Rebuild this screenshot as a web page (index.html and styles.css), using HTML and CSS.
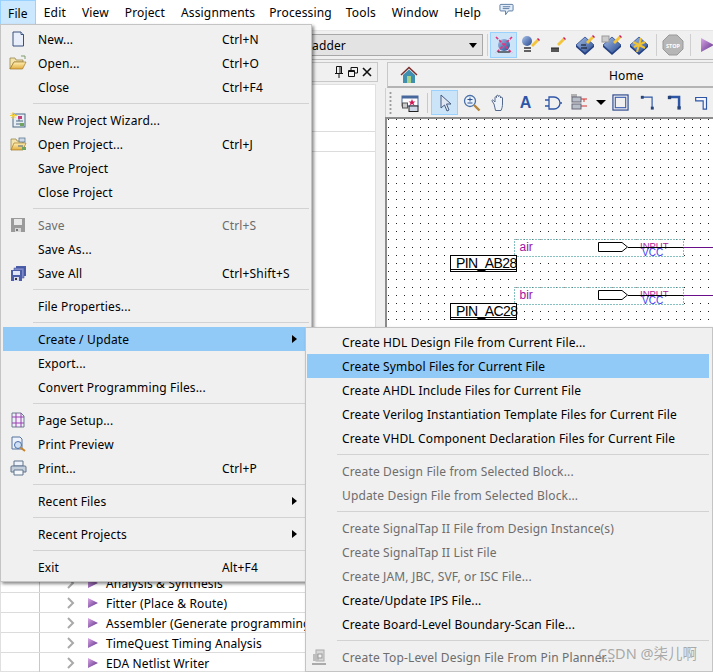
FILE: index.html
```html
<!DOCTYPE html>
<html lang="en">
<head>
<meta charset="utf-8">
<title>Quartus File Menu</title>
<link rel="stylesheet" href="styles.css">
</head>
<body>
<svg class="defs" width="0" height="0" aria-hidden="true">
  <defs>
    <linearGradient id="blueGem" x1="0" y1="0" x2="1" y2="1"><stop offset="0" stop-color="#a9c3ea"/><stop offset="1" stop-color="#27498f"/></linearGradient>
    <linearGradient id="purple" x1="0" y1="0" x2="1" y2="1"><stop offset="0" stop-color="#d9a8e6"/><stop offset="1" stop-color="#5b2a86"/></linearGradient>
    <linearGradient id="folder" x1="0" y1="0" x2="0" y2="1"><stop offset="0" stop-color="#fff1b5"/><stop offset="1" stop-color="#e2ac3f"/></linearGradient>
    <g id="pencil"><path d="M0 6 L6 0 L8 2 L2 8 Z" fill="#f2c53d"/><path d="M6 0 L8 2 L9 1 L7 -1 Z" fill="#c8185c"/></g>
    <g id="gem"><path d="M1 10 L10 2 L19 10 L10 18 Z" fill="url(#blueGem)" stroke="#27498f" stroke-width=".8"/><path d="M1 10 L10 18 L19 10 L19 12 L10 20 L1 12 Z" fill="#1f3d80"/></g>
    <g id="runArrow"><path d="M1 0 L11 5 L1 10 Z" fill="url(#purple)"/></g>
    <g id="chev"><path d="M1 1 L6 6 L1 11" fill="none" stroke="#a9a9a9" stroke-width="2"/></g>
  </defs>
</svg>

<nav class="menubar">
  <span class="mb-item mb-active">File</span>
  <span class="mb-item">Edit</span>
  <span class="mb-item">View</span>
  <span class="mb-item">Project</span>
  <span class="mb-item mb-tight">Assignments</span>
  <span class="mb-item mb-tight">Processing</span>
  <span class="mb-item">Tools</span>
  <span class="mb-item">Window</span>
  <span class="mb-item">Help</span>
  <svg class="mb-icon" width="15" height="14" viewBox="0 0 16 14"><path d="M2 1 H14 A1 1 0 0 1 15 2 V7 A1 1 0 0 1 14 8 H10 L7 12 V8 H2 A1 1 0 0 1 1 7 V2 A1 1 0 0 1 2 1 Z" fill="#e4eefa" stroke="#56779f"/><path d="M4 3.5 H12 M4 5.5 H11" stroke="#56779f"/></svg>
</nav>

<div class="toolbar">
  <div class="combo"><span class="combo-text">adder</span><span class="combo-arrow"></span></div>
  <span class="sep"></span>
  <span class="tool tool-on"><svg width="24" height="24" viewBox="0 0 24 24"><circle cx="12" cy="12" r="6" fill="url(#blueGem)"/><path d="M4 4 L20 20 M20 4 L4 20" stroke="#e8327c" stroke-width="1.6" stroke-dasharray="3 1.5"/><path d="M6 19 H18" stroke="#222" stroke-width="1.2"/></svg></span>
  <span class="tool"><svg width="24" height="24" viewBox="0 0 24 24"><circle cx="8" cy="8" r="5" fill="url(#blueGem)"/><use href="#pencil" x="12" y="6"/><path d="M5 15 H12 M5 18 H12" stroke="#333" stroke-width="1.3"/></svg></span>
  <span class="tool"><svg width="24" height="24" viewBox="0 0 24 24"><use href="#pencil" x="11" y="5"/><path d="M5 15 H13 V19 H5 Z" fill="#555"/><path d="M5 15 H13" stroke="#222"/></svg></span>
  <span class="tool"><svg width="24" height="24" viewBox="0 0 24 24"><use href="#gem" x="2" y="2"/><path d="M8 15 H14 M8 12 H13" stroke="#111" stroke-width="1"/><use href="#pencil" x="13" y="3"/></svg></span>
  <span class="tool"><svg width="24" height="24" viewBox="0 0 24 24"><use href="#gem" x="2" y="2"/><rect x="2" y="3" width="7" height="6" fill="#ccc" stroke="#999"/><use href="#pencil" x="13" y="3"/></svg></span>
  <span class="tool"><svg width="24" height="24" viewBox="0 0 24 24"><use href="#gem" x="2" y="2"/><path d="M6 9 L18 15 M14 5 L10 19 M7 14 L18 9" stroke="#f0c436" stroke-width="2"/></svg></span>
  <span class="sep sep-wide"></span>
  <span class="tool"><svg width="24" height="24" viewBox="0 0 24 24"><path d="M8 2 H16 L22 8 V16 L16 22 H8 L2 16 V8 Z" fill="#b6b6b6" stroke="#999"/><text x="12" y="14.5" class="stop-text">STOP</text></svg></span>
  <span class="sep sep-wide"></span>
  <span class="tool"><svg width="24" height="24" viewBox="0 0 24 24"><path d="M6 5 L19 12 L6 19 Z" fill="url(#purple)"/></svg></span>
</div>

<div class="main">
  <aside class="left">
    <div class="panel-head">
      <svg class="ph-icon" width="10" height="12" viewBox="0 0 10 12"><path d="M2.5 .5 H7.5 V7.5 H2.5 Z M1 7.5 H9 M5 8 V12 M6 1 V7" fill="none" stroke="#111"/></svg>
      <svg class="ph-icon" width="10" height="10" viewBox="0 0 10 10"><path d="M3 3 V.5 H9.500 V6 H7 M.5 3.500 H6.500 V9.500 H.5 Z M.5 4.500 H6.500" fill="none" stroke="#111"/></svg>
      <svg class="ph-icon" width="10" height="10" viewBox="0 0 10 10"><path d="M1 1 L9 9 M9 1 L1 9" stroke="#111" stroke-width="1.600"/></svg>
    </div>
    <div class="panel-body">
      <div class="pb-top"></div>
      <div class="pb-mid"></div>
      <div class="pb-fill"></div>
      <ul class="tasks">
        <li class="task"><span class="t-gutter"></span><svg class="t-chev" width="8" height="12"><use href="#chev"/></svg><svg class="t-run" width="12" height="10"><use href="#runArrow"/></svg><span class="t-label">Analysis &amp; Synthesis</span></li>
        <li class="task"><span class="t-gutter"></span><svg class="t-chev" width="8" height="12"><use href="#chev"/></svg><svg class="t-run" width="12" height="10"><use href="#runArrow"/></svg><span class="t-label">Fitter (Place &amp; Route)</span></li>
        <li class="task"><span class="t-gutter"></span><svg class="t-chev" width="8" height="12"><use href="#chev"/></svg><svg class="t-run" width="12" height="10"><use href="#runArrow"/></svg><span class="t-label">Assembler (Generate programming files)</span></li>
        <li class="task"><span class="t-gutter"></span><svg class="t-chev" width="8" height="12"><use href="#chev"/></svg><svg class="t-run" width="12" height="10"><use href="#runArrow"/></svg><span class="t-label">TimeQuest Timing Analysis</span></li>
        <li class="task"><span class="t-gutter"></span><svg class="t-chev" width="8" height="12"><use href="#chev"/></svg><svg class="t-run" width="12" height="10"><use href="#runArrow"/></svg><span class="t-label">EDA Netlist Writer</span></li>
      </ul>
    </div>
  </aside>

  <section class="right">
    <div class="home-tab">
      <svg class="home-icon" width="18" height="18" viewBox="0 0 18 18"><path d="M1 9 L9 1.500 L17 9" fill="none" stroke="#7b2b2b" stroke-width="1.500"/><path d="M3 9 L9 3.500 L15 9 V17 H3 Z" fill="#3f8fb0"/><rect x="7" y="10" width="4" height="7" fill="#a6d08a"/></svg>
      <span class="home-label">Home</span>
    </div>
    <div class="bdf-toolbar">
      <span class="grip"></span>
      <span class="tool2"><svg width="18" height="18" viewBox="0 0 18 18"><rect x="1" y="2" width="16" height="10" fill="#fff" stroke="#46679b"/><rect x="1" y="2" width="16" height="2.500" fill="#46679b"/><path d="M11 5 L12 7.500 H14.500 L12.500 9 L13.500 11.500 L11 10 L8.500 11.500 L9.500 9 L7.500 7.500 H10 Z" fill="#d01858"/><rect x="8" y="12" width="9" height="5.500" fill="#cdd6e6" stroke="#222"/><rect x="1.500" y="9" width="5" height="5" fill="#ccc" stroke="#555"/></svg></span>
      <span class="sep2"></span>
      <span class="tool2 tool-on"><svg width="18" height="20" viewBox="0 0 18 20"><path d="M5 2 L5 15 L8.500 12 L11 18 L13 17 L10.500 11 L15 11 Z" fill="#dfe6f2" stroke="#44597f"/></svg></span>
      <span class="tool2"><svg width="18" height="18" viewBox="0 0 18 18"><circle cx="7" cy="7" r="5.500" fill="#eaf2fb" stroke="#4a6fa8" stroke-width="1.300"/><path d="M4.500 5.500 H9.500 M7 3.500 V7.500 M4.500 9 H9.500" stroke="#2c4f90"/><path d="M11 11 L16.500 16.500" stroke="#b5853c" stroke-width="2.400"/></svg></span>
      <span class="tool2"><svg width="18" height="18" viewBox="0 0 18 18"><path d="M4 10 L2 7 C1.500 6 3 5.500 3.500 6.500 L5 8 V3.500 C5 2.500 6.500 2.500 6.500 3.500 V2 C6.500 1 8.500 1 8.500 2 V2.500 C8.500 1.500 10.500 1.500 10.500 2.500 V4 C10.500 3 12.500 3 12.500 4 V9 C12.500 13 12 14 11 16.500 H5.500 C5 14 4.500 12 4 10 Z" fill="#eef3fa" stroke="#55688a"/></svg></span>
      <span class="tool2"><span class="a-glyph">A</span></span>
      <span class="tool2"><svg width="18" height="18" viewBox="0 0 18 18"><path d="M5 3 H10 A6 6 0 0 1 10 15 H5 Z M1 6 H5 M1 12 H5 M16 9 H18" fill="none" stroke="#2e56a6" stroke-width="1.300"/></svg></span>
      <span class="tool2"><svg width="18" height="18" viewBox="0 0 18 18"><path d="M1 0 V3 M3 0 V3 M5 0 V3" stroke="#777"/><rect x="1" y="3" width="9" height="5" fill="#b8bec8" stroke="#667"/><rect x="1" y="10" width="9" height="5" fill="#b8bec8" stroke="#667"/><path d="M10 5 H16 M10 12 H16 M13 5 V8" stroke="#d4312e"/></svg></span>
      <span class="drop"></span>
      <span class="tool2"><svg width="17" height="17" viewBox="0 0 18 18"><rect x="1" y="1" width="16" height="16" fill="none" stroke="#26448a" stroke-width="1.200"/><rect x="3.500" y="3.500" width="11" height="11" fill="none" stroke="#3b5fb5" stroke-width="1.200"/></svg></span>
      <span class="tool2"><svg width="15" height="15" viewBox="0 0 18 18"><path d="M2.500 2.500 H14.500 V15.500" fill="none" stroke="#2e56a6" stroke-width="1.400"/><rect x="1" y="1" width="3.500" height="3.500" fill="#26447a"/><rect x="13" y="14" width="3.500" height="3.500" fill="#26447a"/></svg></span>
      <span class="tool2"><svg width="15" height="15" viewBox="0 0 18 18"><path d="M2.500 2.500 H14.500 V15.500" fill="none" stroke="#2e56a6" stroke-width="3"/><rect x="1" y="1" width="4" height="4" fill="#26447a"/><rect x="12.500" y="13.500" width="4" height="4" fill="#26447a"/></svg></span>
      <span class="tool2"><svg width="15" height="15" viewBox="0 0 18 18"><path d="M2 3 H15 V17 H11 V7 H2 Z" fill="#f4f6fb" stroke="#2e56a6" stroke-width="1.400"/></svg></span>
    </div>
    <div class="canvas">
      <svg class="sheet" width="326" height="553" viewBox="387 119 326 553">
        <defs><pattern id="dots" x="388" y="119" width="8" height="8" patternUnits="userSpaceOnUse"><rect width="1" height="1" fill="#222"/></pattern></defs>
        <rect x="387" y="119" width="326" height="553" fill="url(#dots)"/>
        <g class="sym">
          <rect x="514.500" y="239.500" width="169" height="17" class="dotbox"/>
          <text x="519.500" y="251" class="sig">air</text>
          <path d="M598.500 242.500 H622 L627.500 247 L622 251.500 H598.500 Z" class="pin"/>
          <text x="640" y="249" class="inp">INPUT</text>
          <text x="642" y="256" class="vcc">VCC</text>
          <path d="M628 247.500 H683" class="wire"/>
          <path d="M683 247.500 H713" class="bus"/>
          <rect x="450.500" y="255.500" width="66" height="16" class="loc"/>
          <path d="M450 269.500 H517" class="wire"/>
          <text x="456" y="268" class="loc-text">PIN_AB28</text>
        </g>
        <g class="sym">
          <rect x="514.500" y="287.500" width="169" height="17" class="dotbox"/>
          <text x="519.500" y="299" class="sig">bir</text>
          <path d="M598.500 290.500 H622 L627.500 295 L622 299.500 H598.500 Z" class="pin"/>
          <text x="640" y="297" class="inp">INPUT</text>
          <text x="642" y="304" class="vcc">VCC</text>
          <path d="M628 295.500 H683" class="wire"/>
          <path d="M683 295.500 H713" class="bus"/>
          <rect x="450.500" y="303.500" width="66" height="16" class="loc"/>
          <path d="M450 317.500 H517" class="wire"/>
          <text x="456" y="316" class="loc-text">PIN_AC28</text>
        </g>
      </svg>
    </div>
  </section>
</div>

<div class="menu file-menu">
  <div class="mi"><span class="ic"><svg width="16" height="16" viewBox="0 0 16 16"><path d="M3 1 H11 L13.500 3.500 V15 H3 Z" fill="#e9effa" stroke="#36507f"/><path d="M11 1 V3.500 H13.500" fill="#fff" stroke="#36507f"/></svg></span><span class="lb">New...</span><span class="sc">Ctrl+N</span></div>
  <div class="mi"><span class="ic"><svg width="18" height="16" viewBox="0 0 18 16"><path d="M1 3 H6 L7 5 H14 V7 H5 L1 14 Z" fill="#f3e4ae" stroke="#8c7a3e" stroke-width=".7"/><path d="M5 7 H17 L13.500 14 H1 Z" fill="url(#folder)" stroke="#a17a23" stroke-width=".7"/><path d="M12 1 H16 V4" fill="none" stroke="#7c9b6b"/></svg></span><span class="lb">Open...</span><span class="sc">Ctrl+O</span></div>
  <div class="mi"><span class="ic"></span><span class="lb">Close</span><span class="sc">Ctrl+F4</span></div>
  <div class="ms"></div>
  <div class="mi"><span class="ic"><svg width="16" height="16" viewBox="0 0 16 16"><rect x="3" y="2" width="12" height="13" fill="#e7edf2" stroke="#4c6a86"/><path d="M6 12 H13 M9 6 V9 M6 9 H13" stroke="#4c6a86"/><rect x="8" y="4" width="4" height="3" fill="#c63d7a"/><rect x="10" y="11" width="4" height="3" fill="#6fa35f"/><path d="M3 0 V7 M0 3.500 H7 M1 1.500 L5.500 6 M5.500 1.500 L1 6" stroke="#f4cf3e"/></svg></span><span class="lb">New Project Wizard...</span></div>
  <div class="mi"><span class="ic"><svg width="17" height="16" viewBox="0 0 17 16"><path d="M1 3 H6 L7 5 H13 V8 L1 14 Z" fill="#f3e4ae" stroke="#8c7a3e" stroke-width=".7"/><path d="M4 7 H16 L13 14 H1 Z" fill="url(#folder)" stroke="#a17a23" stroke-width=".7"/><rect x="9" y="2" width="6" height="4" fill="#cfd9e6" stroke="#4c6a86" stroke-width=".7"/><rect x="12" y="11" width="4" height="3" fill="#6fa35f"/><path d="M8 10 H13" stroke="#4c6a86"/></svg></span><span class="lb">Open Project...</span><span class="sc">Ctrl+J</span></div>
  <div class="mi"><span class="ic"></span><span class="lb">Save Project</span></div>
  <div class="mi"><span class="ic"></span><span class="lb">Close Project</span></div>
  <div class="ms"></div>
  <div class="mi off"><span class="ic"><svg width="14" height="14" viewBox="0 0 14 14"><rect width="14" height="14" fill="#9a9a9a"/><rect x="3" y="1" width="8" height="6" fill="#e8e8e8"/><rect x="4" y="10" width="6" height="4" fill="#d7d7d7"/><rect x="5" y="11" width="2" height="2" fill="#777"/></svg></span><span class="lb">Save</span><span class="sc">Ctrl+S</span></div>
  <div class="mi"><span class="ic"></span><span class="lb">Save As...</span></div>
  <div class="mi"><span class="ic"><svg width="15" height="15" viewBox="0 0 15 15"><rect x="5" y="0" width="10" height="10" fill="#4d5ea8"/><rect x="3" y="2" width="10" height="10" fill="#7c8ac9" stroke="#3b4a96" stroke-width=".5"/><rect x="0" y="4" width="11" height="11" fill="#4d5ea8"/><rect x="2" y="5" width="7" height="4" fill="#dfe5f7"/><rect x="3" y="11" width="5" height="4" fill="#d5daf0"/><rect x="4" y="12" width="2" height="2" fill="#333"/></svg></span><span class="lb">Save All</span><span class="sc">Ctrl+Shift+S</span></div>
  <div class="ms"></div>
  <div class="mi"><span class="ic"></span><span class="lb">File Properties...</span></div>
  <div class="ms"></div>
  <div class="mi hot"><span class="ic"></span><span class="lb">Create / Update</span><span class="ar"></span></div>
  <div class="mi"><span class="ic"></span><span class="lb">Export...</span></div>
  <div class="mi"><span class="ic"></span><span class="lb">Convert Programming Files...</span></div>
  <div class="ms"></div>
  <div class="mi"><span class="ic"><svg width="14" height="16" viewBox="0 0 14 16"><path d="M1 1 H10 L13 4 V15 H1 Z" fill="#eef0f8" stroke="#6b7d8e"/><path d="M1 5 H13 M1 11 H13 M5 1 V15 M10 1 V15" stroke="#9a3fb0"/></svg></span><span class="lb">Page Setup...</span></div>
  <div class="mi"><span class="ic"><svg width="16" height="16" viewBox="0 0 16 16"><path d="M2 1 H10 L12 3 V13 H2 Z" fill="#eef2fa" stroke="#56729e"/><circle cx="8" cy="9" r="3.500" fill="#cfe0f4" stroke="#4a6fa8"/><path d="M10.500 11.500 L15 15" stroke="#c8852e" stroke-width="2"/></svg></span><span class="lb">Print Preview</span></div>
  <div class="mi"><span class="ic"><svg width="17" height="16" viewBox="0 0 17 16"><path d="M4 1 H13 V6 H4 Z" fill="#eef2fa" stroke="#60748c"/><path d="M2 6 H15 Q16 6 16 7 V12 H1 V7 Q1 6 2 6 Z" fill="#c5cfdb" stroke="#60748c"/><path d="M4 10 H13 V15 H4 Z" fill="#f5f7fb" stroke="#60748c"/></svg></span><span class="lb">Print...</span><span class="sc">Ctrl+P</span></div>
  <div class="ms"></div>
  <div class="mi"><span class="ic"></span><span class="lb">Recent Files</span><span class="ar"></span></div>
  <div class="ms"></div>
  <div class="mi"><span class="ic"></span><span class="lb">Recent Projects</span><span class="ar"></span></div>
  <div class="ms"></div>
  <div class="mi"><span class="ic"></span><span class="lb">Exit</span><span class="sc">Alt+F4</span></div>
</div>

<div class="menu sub-menu">
  <div class="mi"><span class="ic"></span><span class="lb">Create HDL Design File from Current File...</span></div>
  <div class="mi hot"><span class="ic"></span><span class="lb">Create Symbol Files for Current File</span></div>
  <div class="mi"><span class="ic"></span><span class="lb">Create AHDL Include Files for Current File</span></div>
  <div class="mi"><span class="ic"></span><span class="lb">Create Verilog Instantiation Template Files for Current File</span></div>
  <div class="mi"><span class="ic"></span><span class="lb">Create VHDL Component Declaration Files for Current File</span></div>
  <div class="ms"></div>
  <div class="mi off"><span class="ic"></span><span class="lb">Create Design File from Selected Block...</span></div>
  <div class="mi off"><span class="ic"></span><span class="lb">Update Design File from Selected Block...</span></div>
  <div class="ms"></div>
  <div class="mi off"><span class="ic"></span><span class="lb">Create SignalTap II File from Design Instance(s)</span></div>
  <div class="mi off"><span class="ic"></span><span class="lb">Create SignalTap II List File</span></div>
  <div class="mi off"><span class="ic"></span><span class="lb">Create JAM, JBC, SVF, or ISC File...</span></div>
  <div class="mi"><span class="ic"></span><span class="lb">Create/Update IPS File...</span></div>
  <div class="mi"><span class="ic"></span><span class="lb">Create Board-Level Boundary-Scan File...</span></div>
  <div class="ms"></div>
  <div class="mi off"><span class="ic"><svg width="16" height="16" viewBox="0 0 16 16"><rect x="5" y="1" width="8" height="11" fill="#d8d8d8" stroke="#aaa"/><rect x="2" y="5" width="6" height="7" fill="#bdbdbd"/><rect x="7" y="5" width="4" height="4" fill="#f2f2f2" stroke="#999"/><path d="M1 15 H15" stroke="#aaa" stroke-width="2"/></svg></span><span class="lb">Create Top-Level Design File From Pin Planner...</span></div>
</div>

<div class="watermark">CSDN @柒儿啊</div>
</body>
</html>
```
FILE: styles.css
```css
* { box-sizing: border-box; }
html, body { margin: 0; padding: 0; }
body {
  width: 713px; height: 672px; overflow: hidden; position: relative;
  background: #f0f0f0; color: #000;
  font: 12px/1 "Noto Sans", "Noto Sans CJK SC", sans-serif;
  letter-spacing: .15px;
  display: flex; flex-direction: column;
}
.defs { position: absolute; }

.menubar { height: 30px; background: #fff; display: flex; align-items: flex-start; flex: none; }
.mb-item { height: 24px; padding: 2px 8px 0; display: flex; align-items: center; }
.mb-active { background: #cce8ff; border: 1px solid #99d1ff; border-bottom: 0; padding: 2px 7px 0; }
.mb-tight { padding-right: 6px; }
.mb-icon { margin: 3px 0 0 10px; }

.toolbar {
  height: 30px; flex: none; display: flex; align-items: center; padding-left: 3px; overflow: hidden;
  border-top: 1px solid #e6e6e6; border-bottom: 1px solid #bdbdbd;
}
.combo {
  width: 480px; height: 22px; margin-right: 2px; background: #e3e3e3; border: 1px solid #a8a8a8; flex: none;
  display: flex; align-items: center; padding-left: 308px;
}
.combo-text { flex: 1; padding-top: 2px; }
.combo-arrow { width: 0; height: 0; border: 4px solid transparent; border-top: 5px solid #000; border-bottom: 0; margin-right: 5px; }
.sep { width: 1px; height: 22px; flex: none; background: #cfcfcf; margin: 0 2px; }
.sep-wide { margin: 0 2px 0 4px; }
.tool { width: 27px; height: 26px; flex: none; display: flex; align-items: center; justify-content: center; }
.tool-on { background: #cce4f7; border: 1px solid #99d1ff; }
.stop-text { font-size: 5.500px; font-weight: 700; fill: #fff; text-anchor: middle; letter-spacing: 0; }

.main { flex: 1; display: flex; min-height: 0; padding-top: 2px; }
.left { width: 378px; flex: none; display: flex; flex-direction: column; margin-right: 7px; }
.panel-head { height: 20px; flex: none; display: flex; justify-content: flex-end; align-items: center; gap: 4px; padding-right: 5px; border: 1px solid #c8c8c8; }
.ph-icon { flex: none; }
.panel-body { flex: 1; display: flex; flex-direction: column; background: #fff; margin-right: 2px; margin-top: 2px; border: 1px solid #e0e0e0; min-height: 0; }
.pb-top { height: 47px; border-bottom: 1px solid #dcdcdc; flex: none; }
.pb-mid { height: 20px; border-bottom: 1px solid #dcdcdc; flex: none; }
.pb-fill { flex: 1; }
.tasks { list-style: none; margin: 0 0 -2px; padding: 0; flex: none; }
.task { height: 20px; display: flex; align-items: center; border-bottom: 1px solid #dcdcdc; white-space: nowrap; overflow: hidden; }
.t-gutter { width: 39px; height: 100%; border-right: 1px solid #c8c8c8; flex: none; margin-right: 27px; }
.t-chev { flex: none; margin-right: 12px; }
.t-run { flex: none; margin-right: 7px; }
.t-label { padding-top: 2px; }

.right { flex: 1; display: flex; flex-direction: column; min-width: 0; }
.home-tab { height: 26px; flex: none; margin-left: 2px; border-top: 1px solid #c8c8c8; border-left: 1px solid #c8c8c8; border-bottom: 2px solid #b4b4b4; display: flex; align-items: center; padding-left: 12px; }
.home-label { padding: 2px 0 0 191px; }
.bdf-toolbar { height: 29px; flex: none; display: flex; align-items: center; padding-left: 3px; border-left: 1px solid #d0d0d0; overflow: hidden; }
.grip { width: 3px; height: 24px; flex: none; margin-right: 4px; background: radial-gradient(circle, #9c9c9c 1px, transparent 1.200px) 0 0 / 3px 4px; }
.tool2 { width: 27px; height: 25px; flex: none; display: flex; align-items: center; justify-content: center; }
.sep2 { width: 1px; height: 20px; background: #c8c8c8; margin: 0 3px 0 4px; flex: none; }
.a-glyph { font: 700 16px "Liberation Sans", sans-serif; color: #2e56a6; }
.drop { width: 0; height: 0; flex: none; border: 5px solid transparent; border-top: 5px solid #000; border-bottom: 0; margin: 0 1px 0 3px; }
.canvas { flex: 1; background: #fff; border-left: 2px solid #8c8c8c; border-top: 2px solid #8c8c8c; min-height: 0; overflow: hidden; }
.sheet { display: block; }
.dotbox { fill: #fff; stroke: #0f8080; stroke-dasharray: 1 2; }
.sym text { font-family: "Liberation Sans", sans-serif; letter-spacing: 0; }
.sym .sig { font-size: 12px; fill: #a010a0; }
.pin { fill: #fff; stroke: #000; }
.wire { fill: none; stroke: #000; }
.bus { fill: none; stroke: #6a0f8a; }
.sym .inp { font-size: 9.500px; fill: #b0209a; }
.sym .vcc { font-size: 10px; fill: #3a3af0; }
.loc { fill: #fff; stroke: #000; }
.sym .loc-text { font-size: 14px; letter-spacing: -.6px; fill: #000; }

.menu { position: absolute; background: #f0f0f0; border: 1px solid #c4c4c4; box-shadow: 2px 2px 3px rgba(0,0,0,.45); padding: 2px; }
.file-menu { left: 0; top: 24px; width: 312px; height: 558px; }
.sub-menu { left: 305px; top: 327px; width: 408px; height: 345px; padding-left: 1px; padding-right: 3px; }
.mi { height: 24px; display: flex; align-items: center; position: relative; }
.ic { width: 35px; flex: none; display: flex; justify-content: center; }
.file-menu .ic { padding-right: 5px; }
.sub-menu .ic { justify-content: flex-start; padding-left: 4px; }
.lb { flex: none; width: 184px; white-space: nowrap; padding-top: 2px; }
.sub-menu .lb { width: auto; }
.sc { white-space: nowrap; padding-top: 2px; }
.off { color: #6d6d6d; }
.hot { background: #91c9f7; }
.ar { position: absolute; left: 289px; top: 8px; width: 0; height: 0; border: 4px solid transparent; border-left: 5px solid #000; border-right: 0; }
.ms { height: 9px; display: flex; align-items: center; margin-left: 30px; }
.ms::before { content: ""; flex: 1; height: 1px; background: #d2d2d2; }

.watermark { position: absolute; left: 598px; top: 646px; font-size: 14.500px; letter-spacing: 0; color: rgba(150,150,150,.8); white-space: nowrap; }
```
